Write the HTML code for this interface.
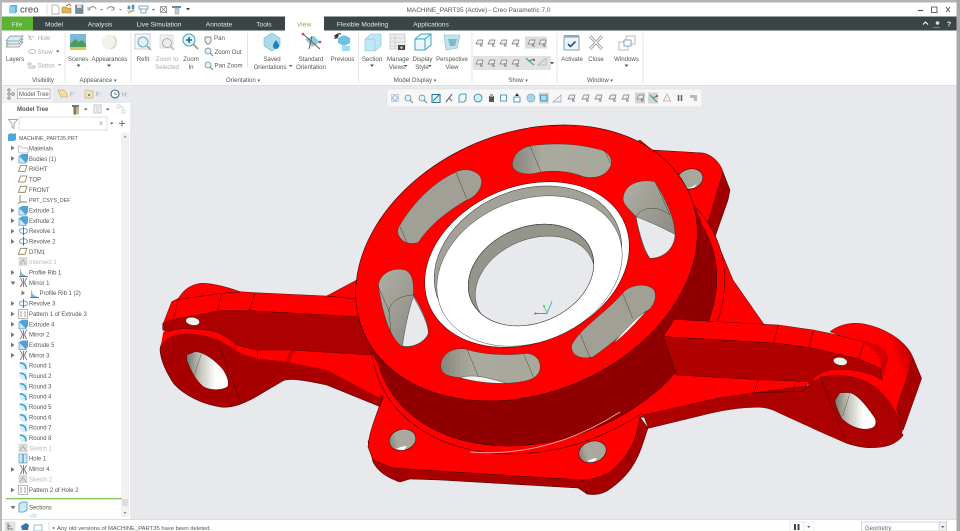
<!DOCTYPE html>
<html><head><meta charset="utf-8"><style>
html,body{margin:0;padding:0;background:#e8e9ed;width:960px;height:531px;overflow:hidden}
svg{display:block;font-family:"Liberation Sans",sans-serif}
.r{font-size:6.1px;fill:#555;text-anchor:middle}
.g{font-size:6.1px;fill:#aaa;text-anchor:middle}
.l{font-size:6.1px;fill:#555}
.t{font-size:6.6px;fill:#e4e8e8;text-anchor:middle}
.n{font-size:5.950px;fill:#555}
.d{font-size:5.950px;fill:#bbb}
.e{stroke:#3a0000;stroke-width:1.500;fill:none}
.a{stroke:#300;stroke-width:2;stroke-linejoin:round}
</style></head><body>
<svg width="960" height="531" viewBox="0 0 960 531" xmlns="http://www.w3.org/2000/svg">
<defs>
<linearGradient id="sl" x1="0" x2="1" y1="0" y2="0"><stop offset="0" stop-color="#85857d"/><stop offset=".3" stop-color="#aaa99e"/><stop offset="1" stop-color="#a9a89d"/></linearGradient>
<linearGradient id="sl2" x1="0" x2="1" y1="0" y2="1"><stop offset="0" stop-color="#b0afa5"/><stop offset="1" stop-color="#85857c"/></linearGradient>
<linearGradient id="ho" x1="0" x2="1" y1="0" y2="0"><stop offset="0" stop-color="#777770"/><stop offset=".35" stop-color="#c9c9bf"/><stop offset=".7" stop-color="#fff"/><stop offset="1" stop-color="#fff"/></linearGradient>
<linearGradient id="cy" gradientUnits="userSpaceOnUse" x1="780" y1="260" x2="890" y1-="260" y2="220"><stop offset="0" stop-color="#f00"/><stop offset=".45" stop-color="#f00"/><stop offset="1" stop-color="#a80000"/></linearGradient>
<clipPath id="bore"><ellipse cx="531" cy="275" rx="65" ry="48" transform="rotate(-22.7 531 275)"/></clipPath>
<g id="ext"><rect x="0" y="2" width="7" height="7" fill="#cfe6f4" stroke="#5a9bc4" stroke-width=".7"/><path d="M0 2l3-2h6v6l-2 3z" fill="#4ea3d6"/></g>
<g id="mir"><path d="M1 0c3 3 3 6 0 9M8 0c-3 3-3 6 0 9M4.500 0v9" fill="none" stroke="#6a5a78" stroke-width=".8"/></g>
<g id="rev"><ellipse cx="4.500" cy="4.500" rx="4" ry="2.500" fill="none" stroke="#6fa5c8" stroke-width="1"/><path d="M4.500 0v9" stroke="#555" stroke-width=".8"/></g>
<g id="rnd"><path d="M0 1h8v8H4C2 9 0 5 0 1z" fill="#d8ecf7"/><path d="M1 2c4 0 6 2 6 6" fill="none" stroke="#35a0d6" stroke-width="1.500"/></g>
<g id="pl"><path d="M2.500 1.500H9L7 7.500H.5z" fill="none" stroke="#8b7a50" stroke-width=".8"/></g>
<g id="rib"><path d="M1 9V1l2 5 5 3z" fill="#7db8dc"/><path d="M0 9h9" stroke="#555" stroke-width=".8"/></g>
<g id="pat"><rect x="0" y="0" width="9" height="9" fill="#fff" stroke="#888" stroke-width=".6"/><path d="M2 2h1v1H2zM6 2h1v1H6zM2 6h1v1H2zM6 6h1v1H6z" fill="#333"/><path d="M2 4h1v1H2zM6 4h1v1H6z" fill="#666"/></g>
<g id="ske"><rect x="0" y="0" width="8" height="8" fill="#ddd" stroke="#ccc" stroke-width=".5"/><path d="M1 7l3-5 3 5" fill="none" stroke="#aaa" stroke-width=".8"/></g>
<path id="ar" d="M0 0l3.500 2.500L0 5z" fill="#777"/>
<g id="sh"><path d="M1 6l2-4h5l-1 4z" fill="#eee" stroke="#777" stroke-width=".7"/><path d="M5 8h3M6 5v3" stroke="#666" stroke-width=".7"/></g>
<g id="mz"><circle cx="4" cy="4" r="3" fill="#e4f0f6" stroke="#5c8ea8" stroke-width=".8"/><path d="M6 6l3 3" stroke="#888" stroke-width="1.200"/></g>
</defs>

<!-- window frame -->
<rect width="960" height="531" fill="#e8e9ed"/>
<rect y="0" width="960" height="2.500" fill="#b4b4b4"/>
<rect y="2.500" width="957" height="14" fill="#fff"/>
<rect x="0" y="0" width="2" height="531" fill="#b8b8b8"/>
<rect x="956.500" y="0" width="3.500" height="531" fill="#a8a8a8"/>

<!-- title -->
<path d="M9 6.500l2-1.500h6v7l-2 1.500H9z" fill="#55b0dc"/><path d="M9 6.500h6v7H9z" fill="#8fd0ec"/>
<text x="20" y="12.500" font-size="9.500" fill="#444">creo</text>
<path d="M47 4v11" stroke="#ddd"/>
<path d="M52 5h5l2 2v7h-7z" fill="#fff" stroke="#999" stroke-width=".7"/>
<path d="M62 7h4l1 1h4v5h-9z" fill="#e5b44f" stroke="#a87f2c" stroke-width=".6"/><path d="M66 6l3-2 2 2" stroke="#c33" stroke-width=".8" fill="none"/>
<rect x="75.500" y="5" width="7.500" height="8.500" fill="#7b8a9a" stroke="#566" stroke-width=".5"/><rect x="77" y="5" width="4.500" height="3" fill="#dde"/>
<path d="M89 9c2-3 6-3 7 0" fill="none" stroke="#7a8a9a" stroke-width="1"/><path d="M88 7v3h3" fill="none" stroke="#7a8a9a" stroke-width=".8"/><path d="M100 9h3l-1.500 1.500z" fill="#888"/>
<path d="M107 9c2-3 6-3 7 0" fill="none" stroke="#7a8a9a" stroke-width="1"/><path d="M114 7v3h-3" fill="none" stroke="#7a8a9a" stroke-width=".8"/><path d="M119 9h3l-1.500 1.500z" fill="#888"/>
<path d="M127 11h8M128 6h2v3h-2zM132 5h2v4h-2z" stroke="#5a8fb0" fill="#5a8fb0" stroke-width=".6"/><path d="M128 13l6-3" stroke="#c8a040"/>
<path d="M139 6h9v3h-9zM141 9h5v4h-5z" fill="#fff" stroke="#5a8fb0" stroke-width=".8"/><path d="M152 9h3l-1.500 1.500z" fill="#555"/>
<rect x="160.500" y="6.500" width="6" height="6" fill="#fff" stroke="#777" stroke-width=".7"/><path d="M161 7l5 5M166 7l-5 5" stroke="#777" stroke-width=".6"/>
<path d="M172 6h9v2h-9z" fill="#5a8fb0"/><path d="M175 8h4v6h-4z" fill="#bcd" stroke="#c88" stroke-width=".5"/>
<path d="M186 8h4l-2 2.500z" fill="#444"/>
<text x="478.500" y="12" text-anchor="middle" font-size="6.450" fill="#555">MACHINE_PART35 (Active) - Creo Parametric 7.0</text>
<path d="M918 10.500h5" stroke="#555" stroke-width="1.200"/>
<rect x="931.500" y="7" width="5.500" height="5.500" fill="none" stroke="#555" stroke-width=".9"/>
<path d="M946 7l4 5M950 7l-4 5" stroke="#555" stroke-width="1"/>

<!-- tab bar -->
<rect x="2" y="16.500" width="954.500" height="14" fill="#3a4546"/>
<rect x="2" y="16.500" width="31" height="14" fill="#5cb233"/>
<rect x="285" y="16.500" width="39" height="14" fill="#fff"/>
<text class="t" x="17" y="26.500">File</text>
<text class="t" x="54" y="26.500">Model</text>
<text class="t" x="100" y="26.500">Analysis</text>
<text class="t" x="159" y="26.500">Live Simulation</text>
<text class="t" x="219" y="26.500">Annotate</text>
<text class="t" x="264" y="26.500">Tools</text>
<text class="t" x="304" y="26.500" style="fill:#7cb35a">View</text>
<text class="t" x="362.500" y="26.500">Flexible Modeling</text>
<text class="t" x="431" y="26.500">Applications</text>
<path d="M923 24.500l2.500-2.500 2.500 2.500" fill="none" stroke="#fff" stroke-width="1.100"/>
<circle cx="937.500" cy="23" r="1.800" fill="#ddd"/><path d="M933 27.500h7" stroke="#999" stroke-width=".7"/>
<text x="949" y="26.500" font-size="7" font-weight="bold" fill="#eee" text-anchor="middle">?</text>

<!-- ribbon -->
<rect x="2" y="30.500" width="954.500" height="54.500" fill="#fff"/>
<rect x="2" y="85" width="954.500" height="1" fill="#dfe0e3"/>
<g stroke="#e4e4e4"><path d="M65 33v50M131 33v50M358.500 33v50M472 33v50M557 33v50M643 33v50M247.500 33v34"/></g>

<!-- Visibility -->
<g stroke="#7f8f98" stroke-width=".7" fill="#e8f0e8"><path d="M6 47l4-5h13l-4 5z"/><path d="M6 44l4-5h13l-4 5z"/><path d="M6 41l4-5h13l-4 5z" fill="#d8eef8"/></g>
<text class="r" x="15" y="61">Layers</text>
<g stroke="#aaa" fill="none" stroke-width=".7"><path d="M28 35l4 5M30 40a3 2 0 1 1 4-3"/><ellipse cx="32" cy="51.500" rx="3.500" ry="2"/><path d="M28 63h3v2h-3zM32 66h3v2h-3zM29 65v3h3"/></g>
<text class="g" x="44" y="40">Hide</text><text class="g" x="45" y="54">Show</text><text class="g" x="46" y="67.500">Status</text>
<path d="M56 50.500h3.500l-1.750 2z" fill="#555"/><path d="M58 64h3.500l-1.750 2z" fill="#aaa"/>
<text class="r" x="43" y="82">Visibility</text>

<!-- Appearance -->
<rect x="70" y="34" width="16" height="16" fill="#7cb8d8"/><path d="M70 44l5-5 4 3 3-2 4 4v6H70z" fill="#4f9a5c"/><rect x="70" y="47" width="16" height="3" fill="#d9c95a"/>
<text class="r" x="78" y="61">Scenes</text><path d="M76.500 64.500h4l-2 2.500z" fill="#555"/>
<circle cx="109" cy="42" r="7.500" fill="#f4f2e8"/><path d="M113 36a7.500 7.500 0 0 1-2 13" fill="none" stroke="#d8d6c8" stroke-width="1.500"/>
<text class="r" x="109.500" y="61">Appearances</text><path d="M107 64.500h4l-2 2.500z" fill="#555"/>
<text class="r" x="98" y="82">Appearance <tspan font-size="5">▾</tspan></text>

<!-- Orientation -->
<rect x="135" y="34" width="15" height="15" fill="#f4f8fa" stroke="#aac" stroke-width=".6"/><circle cx="143" cy="42" r="5" fill="#e2f1f8" stroke="#6ea6c0"/><path d="M147 46l4 4" stroke="#999" stroke-width="1.500"/>
<text class="r" x="143" y="61">Refit</text>
<rect x="160" y="35" width="13" height="13" fill="#f0f0f0" stroke="#ccc" stroke-dasharray="1.500 1"/><circle cx="167" cy="43" r="4.500" fill="#eee" stroke="#aaa"/><path d="M170 46l4 4" stroke="#bbb" stroke-width="1.500"/>
<text class="g" x="167" y="61">Zoom to</text><text class="g" x="167" y="69">Selected</text>
<circle cx="189" cy="40" r="6" fill="#dff0f8" stroke="#4a9ac0"/><path d="M186 40h6M189 37v6" stroke="#14688f" stroke-width="1.500"/><path d="M193 44l5 5" stroke="#999" stroke-width="1.800"/>
<text class="r" x="191" y="61">Zoom</text><text class="r" x="191" y="69">In</text>
<path d="M205 41v-4h6v5l-2 2h-2z" fill="#eee" stroke="#666" stroke-width=".7"/><text class="l" x="214" y="40">Pan</text>
<use href="#mz" x="204" y="47"/><text class="l" x="214.500" y="54">Zoom Out</text>
<use href="#mz" x="204" y="61"/><text class="l" x="214.500" y="67.500">Pan Zoom</text>
<path d="M264 38l8-5 8 5v8l-8 5-8-5z" fill="#a8dcec" stroke="#7db4c8" stroke-width=".6"/><path d="M276 40c2 3 3 4 3 6a3 3 0 0 1-6 0c0-2 1-3 3-6z" fill="#1f82b8"/>
<text class="r" x="272" y="61">Saved</text><text class="r" x="270" y="69">Orientations</text><path d="M289 65h3.500l-1.750 2z" fill="#555"/>
<path d="M305 39l9-3 6 6-8 5z" fill="#7fd0e6"/><path d="M303 34l17 15M309 49l3-13" stroke="#7a5a30" stroke-width="1"/><circle cx="303" cy="34" r="1.300" fill="#c44"/><circle cx="320" cy="42" r="1.300" fill="#c44"/>
<text class="r" x="311" y="61">Standard</text><text class="r" x="311" y="69">Orientation</text>
<path d="M338 38l6-3 6 3v5l-6 3-6-3z" fill="#6cc2e0"/><path d="M342 46h8v5h-8z" fill="#9adcf0"/><path d="M335 39c0-4 3-6 6-5" fill="none" stroke="#333" stroke-width="1.200"/><path d="M334 35l3 4 2-4z" fill="#333"/>
<text class="r" x="342.500" y="61">Previous</text>
<text class="r" x="243" y="82">Orientation <tspan font-size="5">▾</tspan></text>

<!-- Model Display -->
<path d="M365 39l6-5h10v12l-6 5h-10z" fill="#bfe8f6" stroke="#8fc2d4" stroke-width=".6"/><path d="M375 39v12M375 39h-10" stroke="#9ad" stroke-width=".5"/>
<text class="r" x="372" y="61">Section</text><path d="M370 64.500h4l-2 2.500z" fill="#555"/>
<rect x="390" y="34" width="15" height="15" fill="#eee" stroke="#aaa" stroke-width=".5"/><path d="M390 38h15M390 42h15M390 46h15M395 34v15" stroke="#bbb" stroke-width=".6"/><rect x="398" y="45" width="7" height="5" fill="#444"/><circle cx="401.500" cy="47.500" r="1.300" fill="#ccc"/>
<text class="r" x="398" y="61">Manage</text><text class="r" x="397" y="69">Views</text><path d="M404 65h3.500l-1.750 2z" fill="#555"/>
<path d="M415 39l6-5h10v11l-6 5h-10zM415 39h10v11M425 39l6-5" fill="#eaf7fb" stroke="#3ba4c8" stroke-width="1"/>
<text class="r" x="422.500" y="61">Display</text><text class="r" x="422" y="69">Style</text><path d="M428 65h3.500l-1.750 2z" fill="#555"/>
<path d="M444 35l16 0-3 13-11 2z" fill="#bfe4ef" stroke="#8fb6c4" stroke-width=".6"/><path d="M448 39h9l-2 7h-5z" fill="#7fb8cc"/>
<text class="r" x="452" y="61">Perspective</text><text class="r" x="452" y="69">View</text>
<text class="r" x="415" y="82">Model Display <tspan font-size="5">▾</tspan></text>

<!-- Show -->
<rect x="525" y="36.500" width="22" height="12" fill="#ddd"/><rect x="473" y="56" width="78" height="14" fill="#e2e2e2"/>
<use href="#sh" x="475" y="38"/><use href="#sh" x="487" y="38"/><use href="#sh" x="499" y="38"/><use href="#sh" x="511" y="38"/><use href="#sh" x="527" y="38"/><use href="#sh" x="538" y="38"/>
<use href="#sh" x="475" y="58"/><use href="#sh" x="487" y="58"/><use href="#sh" x="499" y="58"/><use href="#sh" x="511" y="58"/>
<path d="M526 58l3 3 5-2M529 61l5 4" stroke="#2a9a80" stroke-width="1" fill="none"/><circle cx="534" cy="60" r="1" fill="#c33"/>
<path d="M538 65l8-7v7z" fill="#dde" stroke="#8ac" stroke-width=".6"/><path d="M550 62h4l-2 2.500z" fill="#555"/>
<text class="r" x="518" y="82">Show <tspan font-size="5">▾</tspan></text>

<!-- Window -->
<rect x="564" y="37" width="15" height="13" fill="#eaf4f9" stroke="#5a8eaa" stroke-width=".8"/><rect x="564" y="35" width="15" height="2" fill="#8ab"/><path d="M568 44l2.500 2.500 5-5" fill="none" stroke="#123f6a" stroke-width="1.500"/>
<text class="r" x="572" y="61">Activate</text>
<path d="M590 36l12 13M602 36l-12 13" stroke="#888" stroke-width="2.800"/><path d="M590 36l12 13M602 36l-12 13" stroke="#f4f4f4" stroke-width="1.400"/>
<text class="r" x="596" y="61">Close</text>
<rect x="626" y="36" width="9" height="8" fill="#fff" stroke="#aaa" stroke-width=".8"/><rect x="619" y="42" width="9" height="8" fill="#fff" stroke="#aaa" stroke-width=".8"/><rect x="624" y="40" width="7" height="6" fill="#fff" stroke="#5a9ab0" stroke-width=".8"/>
<text class="r" x="626.500" y="61">Windows</text><path d="M624.500 64.500h4l-2 2.500z" fill="#555"/>
<text class="r" x="600" y="82">Window <tspan font-size="5">▾</tspan></text>

<!-- MINI TOOLBAR -->
<rect x="387" y="89" width="315" height="18" fill="#f7f7f8" stroke="#e0e0e3" stroke-width=".7"/>
<rect x="539" y="92.500" width="10" height="11" fill="#d8d8d8"/><rect x="635" y="92.500" width="10" height="11" fill="#d4d4d4"/><rect x="648" y="92.500" width="10" height="11" fill="#d4d4d4"/>
<rect x="391.500" y="94.500" width="7" height="7" fill="#eef" stroke="#9ab" stroke-width=".5"/><circle cx="395" cy="98" r="2.300" fill="none" stroke="#6a98b0" stroke-width=".7"/>
<use href="#mz" x="404" y="94"/><use href="#mz" x="418" y="94"/>
<path d="M432 94.500h8v8h-8z" fill="#dff" stroke="#2a6f96"/><path d="M433 101l6-6" stroke="#2a6f96"/>
<path d="M446 102l3-4 3-4M449 98l3 3" stroke="#667" stroke-width="1.100" fill="none"/>
<path d="M459 96l2-2h5v6l-2 2h-5z" fill="#eaf7fb" stroke="#2a7fa8" stroke-width=".8"/>
<circle cx="478" cy="98" r="4" fill="#d0ecf6" stroke="#2a7fa8" stroke-width=".8"/>
<path d="M489 96h5v6h-5z" fill="#555"/><path d="M490 94h3v3h-3z" fill="#aaa"/>
<rect x="500.500" y="95" width="6" height="6" fill="#fff" stroke="#2a7fa8" stroke-width=".8"/>
<path d="M514 97h6v5h-6z" fill="#fff" stroke="#2a7fa8" stroke-width=".8"/><path d="M517 93l-2 3h4z" fill="#333"/>
<circle cx="531" cy="98" r="4" fill="#a8d8e8" stroke="#7ab" stroke-width=".7"/>
<path d="M540 95h7v6h-6z" fill="#a6dcf2" stroke="#2a7fa8" stroke-width=".8"/>
<path d="M553 102l8-7v7z" fill="#eef" stroke="#8ab" stroke-width=".7"/>
<use href="#sh" x="567" y="93"/><use href="#sh" x="581" y="93"/><use href="#sh" x="594" y="93"/><use href="#sh" x="608" y="93"/><use href="#sh" x="621" y="93"/><use href="#sh" x="636" y="93"/>
<path d="M650 95l3 3 4-2M653 98l4 4" stroke="#2a9a80" stroke-width="1" fill="none"/><circle cx="657" cy="96" r="1" fill="#c33"/>
<path d="M667 94l3.500 7h-7z" fill="none" stroke="#aaa" stroke-width=".8"/>
<path d="M678.500 95v6M681.500 95v6" stroke="#666" stroke-width="1.600"/>
<path d="M690 95h7v6h-3v-3h-4z" fill="#bbb"/>

<!-- MODEL -->
<!-- flange side -->
<path d="M640 417L648 428C640 452 636 472 607 491C600 495 592 495 587 494L578 488 440 480 410 479 400 482C388 478 378 472 373 462L368 441 388 431 648 417Z" fill="#a80000" stroke="#300" stroke-width=".5"/>
<path d="M583 480l4 14M628 455l5 10M393 468l5 14" stroke="#300" stroke-width=".5" fill="none"/>
<path d="M723 172l7 18-2 10-13 37-7-14z" fill="#a00000" stroke="#300" stroke-width=".5"/>
<!-- flange top -->
<path d="M640 140L652 150 703 153C712 155 720 162 723 172L708 223 715 237 733 280 763 323 810 382 800 392 757 392 717 398 640 417C636 440 630 455 610 472C600 478 592 479 583 480L440 471 393 468 373 460 368 447C369 430 378 412 382 398L327 370 300 330 357 280z" fill="#f00" stroke="#300" stroke-width=".5"/>
<ellipse cx="690" cy="179" rx="13" ry="10" transform="rotate(-15 690 179)" fill="#a8a79c" stroke="#300" stroke-width=".5"/>
<path d="M686 188c4 0 9-2 11-5l-3 5z" fill="#fff"/>
<ellipse cx="402.500" cy="440" rx="13.500" ry="10.500" transform="rotate(-15 402 440)" fill="url(#sl)" stroke="#300" stroke-width=".5"/>
<path d="M396 449c4-2 8-3 11-3l-3 4z" fill="#fff"/>
<ellipse cx="592.500" cy="452" rx="14" ry="10.500" transform="rotate(-18 592 452)" fill="url(#sl)" stroke="#300" stroke-width=".5"/>
<path d="M587 461c3-1 7-3 10-3l-2 3-5 1z" fill="#fff"/>

<!-- left arm -->
<g transform="translate(140 270) scale(.33333)">
<path d="M60,240 C62,270 75,300 100,340 C130,375 190,405 250,412 C285,412 310,400 340,385 L430,332 C450,325 480,328 560,345 L720,410 L730,380 L560,280 L200,180 L85,190 C70,205 60,225 60,240Z" fill="#a80000" stroke="#300" stroke-width="1.500"/>
<path d="M60,240 C65,215 85,195 130,190 C190,190 240,205 285,240 C310,255 340,262 350,265 L440,275 L560,300 L722,385 L700,240 L450,230 L250,180 L130,165 L70,185Z" fill="#f00"/>
<path d="M115,85 C130,60 150,45 180,40 C210,38 260,50 300,65 L345,68 L560,78 L650,30 L660,150 L330,125 L240,125 L100,150 L68,165 L95,95Z" fill="#f00" stroke="#300" stroke-width="1.200"/>
<path d="M68,160 L100,148 L240,122 L330,122 L650,140 L700,255 L450,240 L355,240 C320,235 300,228 285,222 C260,200 235,183 200,180 L130,175 C110,176 90,183 85,185 L68,180Z" fill="#ad0000" stroke="#300" stroke-width="1.200"/>
<path class="e" d="M115,88 L245,70 L300,66 M115,88 L100,148 M245,72 L232,122 M345,68 L328,122 M230,208 L305,402 M352,240 L352,265 M462,242 L446,275 M455,242 L440,275 M285,222 L285,240 M560,78 L650,87"/>
<path d="M140,255 L165,245 C190,245 225,270 250,300 C262,320 268,335 263,350 C245,362 210,362 190,350 C165,330 150,295 140,270Z" fill="url(#ho)" stroke="#300" stroke-width="1.200"/>
<path d="M185,248 L162,318" stroke="#444" stroke-width="1.200"/>
<ellipse cx="158" cy="154" rx="21" ry="12" transform="rotate(10 158 154)" fill="#f4f4ec" stroke="#300" stroke-width="1"/>
</g>

<!-- cylinder -->
<ellipse cx="548" cy="310" rx="183" ry="136" transform="rotate(-22.7 548 310)" fill="#f00" stroke="#300" stroke-width=".5"/>
<ellipse cx="546" cy="308" rx="177" ry="130" transform="rotate(-22.7 546 308)" fill="#900000" stroke="#300" stroke-width=".5"/>
<ellipse cx="536" cy="285" rx="177" ry="130" transform="rotate(-22.7 536 285)" fill="#900000"/>
<path d="M470 452c50 4 100-8 150-40" fill="none" stroke="#ff9a9a" stroke-width="1"/>
<!-- disc top -->
<ellipse cx="526.500" cy="263" rx="177" ry="130" transform="rotate(-22.7 526.500 263)" fill="#f00" stroke="#300" stroke-width=".6"/>
<!-- ring -->
<ellipse cx="527" cy="264.500" rx="106" ry="78" transform="rotate(-22.7 527 264.500)" fill="#fff" stroke="#300" stroke-width=".5"/>
<ellipse cx="528" cy="263" rx="97" ry="73" transform="rotate(-22.7 528 263)" fill="#a3a298" stroke="#333" stroke-width=".5"/>
<ellipse cx="529.500" cy="271" rx="96" ry="71" transform="rotate(-22.7 529.500 271)" fill="#fff" stroke="#333" stroke-width=".4"/>
<!-- bore -->
<ellipse cx="531" cy="275" rx="65" ry="48" transform="rotate(-22.7 531 275)" fill="#96958c" stroke="#333" stroke-width=".5"/>
<g clip-path="url(#bore)"><ellipse cx="535" cy="284" rx="62" ry="45" transform="rotate(-22.7 535 284)" fill="#e8e9ed" stroke="#333" stroke-width=".4"/></g>
<ellipse cx="531" cy="275" rx="65" ry="48" transform="rotate(-22.7 531 275)" fill="none" stroke="#333" stroke-width=".5"/>

<!-- slots -->
<g transform="translate(350 115) scale(.33333)" stroke="#2e2e2a" stroke-width="1.200">
<path d="M488,140 C495,105 530,92 560,90 C640,82 700,90 755,105 C780,115 795,140 775,165 C760,185 730,192 700,185 C650,165 590,165 555,175 C520,182 480,170 488,140Z" fill="url(#sl)"/>
<path d="M540,92 L572,170 M762,105 L785,150" fill="none"/>
<path d="M150,330 C190,260 260,195 320,170 C350,155 395,170 395,200 C395,225 370,250 350,255 C290,290 240,330 205,382 C185,390 160,385 148,365 C140,350 143,340 150,330Z" fill="#a1a096"/>
<path d="M318,172 L350,250 M150,335 L172,385" fill="none"/>
<path d="M85,510 C90,475 130,455 165,465 C190,475 192,510 190,540 C210,570 240,630 235,655 C225,680 190,700 158,695 C130,680 100,620 85,510Z" fill="url(#sl2)"/>
<path d="M190,545 C175,590 165,640 157,693 C190,700 225,680 235,655 C235,625 210,580 190,545Z" fill="#e8e9ed"/>
<path d="M85,515 L118,590 L122,650 M116,590 C120,560 150,540 195,540" fill="none"/>
<path d="M820,245 C825,210 865,190 915,200 C945,250 975,310 975,355 C975,395 945,430 905,430 C885,425 870,375 858,305 C835,280 815,265 820,245Z" fill="url(#sl2)"/>
<path d="M858,305 C900,320 950,345 975,358 C975,395 945,430 900,430 C885,410 868,360 858,305Z" fill="#e8e9ed"/>
<path d="M858,305 C875,275 920,270 960,300 M915,200 L960,300" fill="none"/>
<path d="M665,690 C690,640 770,590 818,535 C835,510 890,500 912,525 C925,550 905,585 885,590 C840,640 780,690 730,725 C700,735 660,725 665,690Z" fill="#a1a096"/>
<path d="M790,685 C825,660 860,620 888,590 C860,605 820,650 790,685Z" fill="#f4f4f4"/>
<path d="M818,535 L848,610 M690,655 L720,728" fill="none"/>
<path d="M272,750 C275,715 310,695 350,703 C400,720 480,722 530,715 C565,718 580,750 565,775 C550,795 530,800 470,805 C420,805 370,800 330,788 C300,785 270,780 272,750Z" fill="url(#sl)"/>
<path d="M330,788 C370,775 420,790 470,805 C420,806 370,800 330,788Z" fill="#f4f4f4"/>
<path d="M352,705 L385,785 M520,715 L550,785" fill="none"/>
</g>

<!-- right arm -->
<g transform="translate(620 280) scale(.33333)">
<!-- strip on flange -->
<path d="M175,285 L400,298 L570,305 L540,335 L410,337 L290,355 L70,405 L60,395 L165,280Z" fill="#f00"/>
<!-- lower side of arm -->
<path d="M70,405 L85,445 L250,405 C300,392 370,380 420,382 C445,383 465,392 480,400 L600,455 L680,490 C710,500 740,505 760,503 C790,503 830,495 850,465 L700,300 L410,337 L290,355Z" fill="#ad0000" stroke="#300" stroke-width="1.200"/>
<!-- boss cylinder (bright) -->
<path d="M630,155 C665,128 710,125 745,135 C790,145 860,180 880,235 L830,385 L848,450 C840,470 835,478 822,488 L700,330 L570,305 L600,270 L800,225Z" fill="url(#cy)" stroke="#300" stroke-width="1.200"/>
<!-- boss outer side -->
<path d="M880,235 L905,295 L850,450 L830,385Z" fill="#a80000" stroke="#300" stroke-width="1.200"/>
<!-- boss front face -->
<path d="M603,292 C650,280 720,285 770,325 C810,360 832,400 848,450 C842,478 822,495 800,498 L760,503 L680,490 L600,455 L480,400 C450,385 430,382 420,382 L340,385 L410,337 L540,335 C555,330 565,318 570,305Z" fill="#ad0000"/>
<path d="M603,292 C650,280 720,285 770,325 C810,360 832,400 848,450" fill="none" stroke="#300" stroke-width="1"/>
<path class="e" d="M600,288 L680,490 M415,300 L402,336 M525,308 L520,335 M410,337 L540,335 C555,330 565,318 570,305"/>
<!-- top face -->
<path d="M130,170 L163,118 L475,135 L580,150 L630,160 L730,185 L770,195 C790,205 800,220 803,235 L785,300 L780,265 L720,238 L580,205 L475,190Z" fill="#f00" stroke="#300" stroke-width="1.200"/>
<path d="M772,195 C790,205 800,220 803,235 L785,300 L780,265 C790,245 770,210 730,185Z" fill="#d80000"/>
<!-- front face -->
<path d="M130,170 L475,190 L580,205 L720,238 L780,265 L785,300 C760,280 700,265 650,268 C620,270 600,275 570,305 L400,298 L170,285Z" fill="#b00000" stroke="#300" stroke-width="1.200"/>
<path class="e" d="M475,135 L460,190 M580,152 L565,205 M733,185 L717,238 M803,235 L782,268"/>
<path d="M645,360 L660,338 L690,338 C715,345 745,385 765,415 C770,425 768,435 760,442 C735,455 695,445 665,415 C655,395 645,375 645,360Z" fill="url(#ho)" stroke="#300" stroke-width="1.200"/>
<path d="M690,338 L668,408" stroke="#444" stroke-width="1.200"/>
<ellipse cx="661" cy="244" rx="21" ry="12" transform="rotate(10 661 244)" fill="#f4f4ec" stroke="#300" stroke-width="1"/>
</g>

<!-- csys -->
<path d="M535 313.500h12l5-12" stroke="#d33" stroke-width=".7" fill="none"/><path d="M547 313l-3-7" stroke="#4c6" stroke-width=".8"/><path d="M547 313l5-12" stroke="#3cc" stroke-width=".8"/><circle cx="544" cy="306" r="1" fill="#2c4"/><circle cx="535.500" cy="313.500" r="1" fill="#c33"/>

<!-- LEFT PANEL -->
<rect x="2" y="86" width="127" height="17" fill="#f0f1f3"/>
<rect x="2" y="103" width="128" height="418" fill="#fff"/>
<rect x="53" y="86" width="77" height="17" fill="#e9eaee"/>
<rect x="130" y="86" width="4" height="435" fill="#e8e9ed"/>
<circle cx="9" cy="90" r="1.200" fill="none" stroke="#555" stroke-width=".6"/><circle cx="9" cy="94" r="1.200" fill="none" stroke="#555" stroke-width=".6"/><circle cx="9" cy="98" r="1.200" fill="none" stroke="#555" stroke-width=".6"/><circle cx="13" cy="94" r="1.300" fill="none" stroke="#555" stroke-width=".6"/>
<rect x="17.500" y="89" width="32.500" height="9.500" fill="#fff" stroke="#999" stroke-width=".6"/><text class="n" x="19" y="96.200">Model Tree</text>
<path d="M58 90h6l3 4v3h-6z" fill="#f5dfa8" stroke="#c49a50" stroke-width=".6"/><text class="d" x="70" y="96.500" style="fill:#999">F:</text>
<path d="M85 90h4l1 1h3v7h-8z" fill="#f0e2bc" stroke="#c49a50" stroke-width=".5"/><circle cx="89" cy="95" r="1" fill="#2a7fa8"/><text class="d" x="96" y="96.500" style="fill:#999">F:</text>
<circle cx="115" cy="94" r="4" fill="#fff" stroke="#2f6a96" stroke-width="1.100"/><path d="M115 92v2.500h2" stroke="#333" stroke-width=".6" fill="none"/><text class="d" x="122" y="96.500" style="fill:#999">H:</text>

<text x="17" y="111" font-size="6" font-weight="bold" fill="#555">Model Tree</text>
<path d="M72 105h7v2h-7z" fill="#777"/><path d="M74 107h2v7h-2zM78 107v7" stroke="#7a6a40" fill="#a08a50" stroke-width="1"/>
<path d="M84 108.500h3.500l-1.750 2z" fill="#555"/>
<rect x="94" y="105" width="7" height="8" fill="#fff" stroke="#999" stroke-width=".6"/><path d="M95.500 107h4M95.500 109h4M95.500 111h4" stroke="#888" stroke-width=".5"/>
<path d="M106 108.500h3.500l-1.750 2z" fill="#555"/>
<g stroke="#ccc" stroke-width=".7" fill="none"><rect x="117" y="105" width="3" height="3"/><rect x="122" y="110" width="3" height="3"/><path d="M120 107h3v3"/></g>

<path d="M8.500 119.500h9l-3.500 4v5l-2-1.500v-3.500z" fill="#fff" stroke="#888" stroke-width=".7"/>
<rect x="19" y="117" width="88" height="13" fill="#fff" stroke="#d5d5d5" stroke-width=".7"/>
<path d="M99.500 121.500l3 3.500M102.500 121.500l-3 3.500" stroke="#aaa" stroke-width=".7"/>
<path d="M110 122.500h3.500l-1.750 2z" fill="#555"/>
<path d="M119 123.500h6M122 120.500v6" stroke="#777" stroke-width="1.100"/>

<!-- scrollbar -->
<rect x="121.500" y="133" width="7" height="384" fill="#f2f2f2" stroke="#e6e6e6" stroke-width=".4"/>
<path d="M123.500 137.500h3l-1.500-2z" fill="#888"/><path d="M123.500 512h3l-1.500 2z" fill="#888"/>
<rect x="122" y="499" width="6" height="7" fill="#ddd"/>

<path d="M8 134.500l2-1h6v6l-2 1.500H8z" fill="#4ea8d8"/>
<text class="n" x="19" y="140" style="font-size:5.300px">MACHINE_PART35.PRT</text>

<g>
<use href="#ar" x="11" y="145.500"/><path d="M18 146h3l1 2h6v5h-9z" fill="#fff" stroke="#888" stroke-width=".5"/><text class="n" x="29" y="150.500">Materials</text>
<use href="#ar" x="11" y="156"/><use href="#ext" x="19" y="154"/><text class="n" x="29" y="160.800">Bodies (1)</text>
<use href="#pl" x="18" y="164"/><text class="n" x="29" y="171.200">RIGHT</text>
<use href="#pl" x="18" y="174.500"/><text class="n" x="29" y="181.500">TOP</text>
<use href="#pl" x="18" y="184.800"/><text class="n" x="29" y="191.800">FRONT</text>
<path d="M20 195v7l-2 2M20 202h7" stroke="#6a5a40" stroke-width=".7" fill="none"/><text class="n" x="29" y="202.200" style="font-size:5.300px">PRT_CSYS_DEF</text>
<use href="#ar" x="11" y="208"/><use href="#ext" x="19" y="206"/><text class="n" x="29" y="212.500">Extrude 1</text>
<use href="#ar" x="11" y="218.300"/><use href="#ext" x="19" y="216.300"/><text class="n" x="29" y="222.800">Extrude 2</text>
<use href="#ar" x="11" y="228.700"/><use href="#rev" x="19" y="226.500"/><text class="n" x="29" y="233.200">Revolve 1</text>
<use href="#ar" x="11" y="239"/><use href="#rev" x="19" y="236.800"/><text class="n" x="29" y="243.500">Revolve 2</text>
<use href="#pl" x="18" y="246.800"/><text class="n" x="29" y="253.800">DTM1</text>
<use href="#ske" x="19" y="257.500"/><text class="d" x="29" y="264.200">Intersect 1</text>
<use href="#ar" x="11" y="270"/><use href="#rib" x="19" y="267.500"/><text class="n" x="29" y="274.500">Profile Rib 1</text>
<path d="M10.500 281.500h5l-2.500 3.500z" fill="#777"/><use href="#mir" x="19" y="278"/><text class="n" x="29" y="284.800">Mirror 1</text>
<use href="#ar" x="21.500" y="290.500"/><use href="#rib" x="30" y="288.500"/><text class="n" x="39.500" y="295.200">Profile Rib 1 (2)</text>
<use href="#ar" x="11" y="301"/><use href="#rev" x="19" y="299"/><text class="n" x="29" y="305.500">Revolve 3</text>
<use href="#ar" x="11" y="311.500"/><use href="#pat" x="18.500" y="309.500"/><text class="n" x="29" y="316">Pattern 1 of Extrude 3</text>
<use href="#ar" x="11" y="321.800"/><use href="#ext" x="19" y="319.800"/><text class="n" x="29" y="326.300">Extrude 4</text>
<use href="#ar" x="11" y="332.200"/><use href="#mir" x="19" y="330"/><text class="n" x="29" y="336.700">Mirror 2</text>
<use href="#ar" x="11" y="342.500"/><use href="#ext" x="19" y="340.500"/><text class="n" x="29" y="347">Extrude 5</text>
<use href="#ar" x="11" y="352.800"/><use href="#mir" x="19" y="350.800"/><text class="n" x="29" y="357.300">Mirror 3</text>
<use href="#rnd" x="19" y="361"/><text class="n" x="29" y="367.700">Round 1</text>
<use href="#rnd" x="19" y="371.300"/><text class="n" x="29" y="378">Round 2</text>
<use href="#rnd" x="19" y="381.700"/><text class="n" x="29" y="388.400">Round 3</text>
<use href="#rnd" x="19" y="392"/><text class="n" x="29" y="398.700">Round 4</text>
<use href="#rnd" x="19" y="402.300"/><text class="n" x="29" y="409">Round 5</text>
<use href="#rnd" x="19" y="412.700"/><text class="n" x="29" y="419.400">Round 6</text>
<use href="#rnd" x="19" y="423"/><text class="n" x="29" y="429.700">Round 7</text>
<use href="#rnd" x="19" y="433.300"/><text class="n" x="29" y="440">Round 8</text>
<use href="#ske" x="19" y="444"/><text class="d" x="29" y="450.300">Sketch 1</text>
<rect x="19" y="454" width="8" height="9" fill="#cfe8f6" stroke="#5a9bc4" stroke-width=".7"/><path d="M23 454v9" stroke="#2a7fa8"/><text class="n" x="29" y="460.700">Hole 1</text>
<use href="#ar" x="11" y="467"/><use href="#mir" x="19" y="465"/><text class="n" x="29" y="471">Mirror 4</text>
<use href="#ske" x="19" y="475"/><text class="d" x="29" y="481.300">Sketch 2</text>
<use href="#ar" x="11" y="487.500"/><use href="#pat" x="18.500" y="485.500"/><text class="n" x="29" y="492">Pattern 2 of Hole 2</text>
<rect x="6" y="498" width="115.500" height="1.300" fill="#7dc653"/>
<path d="M10.500 506h5l-2.500 3.500z" fill="#777"/><path d="M19 504l3-2h5v8l-3 2h-5z" fill="#cfe8f6" stroke="#4a9bc8" stroke-width=".8"/><text class="n" x="29" y="509.700">Sections</text>
<path d="M30 516l3-2h3v3h-6z" fill="#e8f3f8" stroke="#bbb" stroke-width=".4"/>
</g>

<!-- STATUS BAR -->
<rect x="2" y="519.500" width="954.500" height="11.500" fill="#fff"/>
<rect x="2" y="519" width="954.500" height=".8" fill="#d4d5d8"/>
<rect x="5" y="522" width="10" height="9" fill="#e4e4e4" stroke="#ccc" stroke-width=".5"/><path d="M8 523v6h5M8 526h3" stroke="#555" stroke-width=".8" fill="none"/>
<path d="M21 526l5-3 3 2-1 5h-6z" fill="#2e77a8"/>
<rect x="34" y="525" width="8" height="6" fill="#fff" stroke="#8ab" stroke-width=".8"/>
<path d="M49 522v9" stroke="#ddd"/>
<circle cx="53.500" cy="528" r=".9" fill="#2a5f8a"/>
<text x="57" y="530" font-size="5.850" fill="#555">Any old versions of MACHINE_PART35 have been deleted.</text>
<rect x="790" y="522" width="14" height="9" fill="#fff" stroke="#ddd" stroke-width=".5"/>
<path d="M794 524h2v6h-2zM797.500 524h2v6h-2z" fill="#444"/>
<rect x="804" y="522" width="10" height="9" fill="#fff" stroke="#ddd" stroke-width=".5"/><path d="M807 526h3.500l-1.750 2z" fill="#666"/>
<rect x="861.500" y="522" width="85" height="9" fill="#fff" stroke="#bbb" stroke-width=".6"/>
<rect x="939" y="522" width="7.500" height="9" fill="#f0f0f0" stroke="#bbb" stroke-width=".5"/><path d="M941 526h3.500l-1.750 2z" fill="#666"/>
<text x="865" y="530" font-size="6" fill="#666">Geometry</text>
</svg>
</body></html>
